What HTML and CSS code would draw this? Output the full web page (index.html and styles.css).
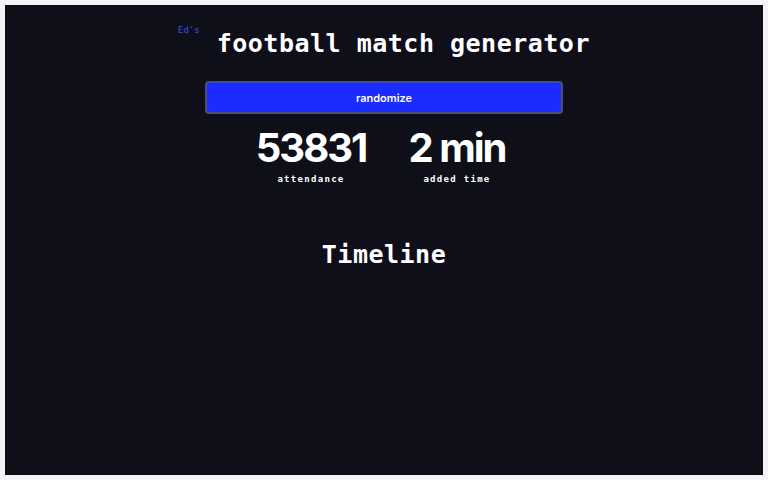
FILE: index.html
```html
<!DOCTYPE html>
<html lang="en">
<head>
<meta charset="utf-8">
<title>football match generator</title>
<link rel="stylesheet" href="styles.css">
</head>
<body>
<main class="app">
  <header class="masthead">
    <span class="owner">Ed's</span>
    <h1 class="title">football match generator</h1>
  </header>
  <button class="randomize" type="button">randomize</button>
  <section class="stats">
    <div class="stat stat-attendance">
      <div class="stat-value">53831</div>
      <div class="stat-label">attendance</div>
    </div>
    <div class="stat stat-time">
      <div class="stat-value">2 min</div>
      <div class="stat-label">added time</div>
    </div>
  </section>
  <h2 class="timeline-heading">Timeline</h2>
</main>
</body>
</html>
```
FILE: styles.css
```css
html, body {
  margin: 0;
  padding: 0;
}

body {
  background: #f3f4f6;
  padding: 5px;
  height: 480px;
  box-sizing: border-box;
}

.app {
  background: #0e0f19;
  height: 470px;
  width: 758px;
  display: flex;
  flex-direction: column;
  align-items: center;
  color: #ffffff;
  font-family: "Inter", "Liberation Sans", sans-serif;
}

.masthead {
  display: flex;
  align-items: flex-start;
  margin-top: 20px;
}

.owner {
  font-family: "DejaVu Sans Mono", monospace;
  font-size: 9px;
  line-height: 10px;
  color: #3a4bff;
  margin-top: 0;
  margin-right: 17px;
}

.title {
  margin: 0;
  font-family: "DejaVu Sans Mono", monospace;
  font-weight: bold;
  font-size: 25px;
  line-height: 38px;
  letter-spacing: 0.5px;
}

.randomize {
  margin-top: 18px;
  width: 358px;
  height: 33px;
  background: #1a2cff;
  border: 2px solid #4a4f6a;
  border-radius: 4px;
  color: #ffffff;
  font-family: "Inter", "Liberation Sans", sans-serif;
  font-weight: 600;
  font-size: 11px;
  padding: 0;
}

.stats {
  display: flex;
  gap: 36px;
  margin-top: 12px;
}

.stat {
  display: flex;
  flex-direction: column;
  align-items: center;
  width: 110px;
}

.stat-value {
  font-family: "Inter", sans-serif;
  font-weight: 700;
  font-size: 40px;
  line-height: 44px;
  letter-spacing: -2px;
  white-space: nowrap;
}

.stat-label {
  font-family: "DejaVu Sans Mono", monospace;
  font-weight: bold;
  font-size: 9px;
  line-height: 12px;
  letter-spacing: 1.3px;
  margin-top: 3px;
  white-space: nowrap;
}

.timeline-heading {
  margin: 53px 0 0;
  font-family: "DejaVu Sans Mono", monospace;
  font-weight: bold;
  font-size: 25px;
  line-height: 34px;
  letter-spacing: 0.5px;
}
```
